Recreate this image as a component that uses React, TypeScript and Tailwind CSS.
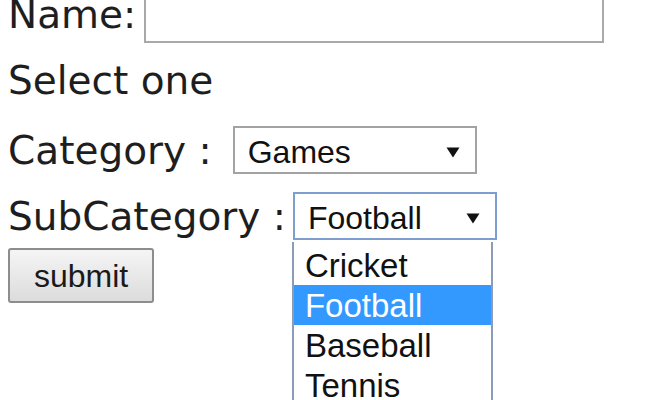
import React from "react";

const labelFont = { fontFamily: '"DejaVu Sans", Verdana, sans-serif' };
const controlFont = { fontFamily: '"Liberation Sans", Arial, sans-serif' };

function Arrow() {
  return (
    <svg width="14" height="11" viewBox="0 0 14 11" className="shrink-0">
      <path d="M0.5 0.5 H13.5 L7 10.5 Z" fill="#111" />
    </svg>
  );
}

function FakeSelect({
  value,
  width,
  borderClass,
  children,
}: {
  value: string;
  width: string;
  borderClass: string;
  children?: React.ReactNode;
}) {
  return (
    <div className={`relative ${width}`}>
      <div
        className={`h-[48px] w-full bg-white border-2 ${borderClass} flex items-center justify-between pl-[13px] pr-[15px] pt-[4px]`}
      >
        <span className="text-[32px] leading-none text-[#111]" style={controlFont}>
          {value}
        </span>
        <Arrow />
      </div>
      {children}
    </div>
  );
}

const subOptions = ["Cricket", "Football", "Baseball", "Tennis", "Hockey"];

export default function App() {
  return (
    <div className="h-[400px] w-[650px] overflow-hidden bg-white">
      <form className="flex flex-col pl-[8px] -mt-[5px] text-[#1e1e1e]">
        {/* Name */}
        <div className="flex items-start h-[48px]">
          <span className="text-[39px] leading-[39px]" style={labelFont}>
            Name:
          </span>
          <div className="ml-[8px] h-[48px] w-[460px] border-2 border-[#a9a9a9] bg-white" />
        </div>

        <div className="mt-[18px] text-[39px] leading-[39px]" style={labelFont}>
          Select one
        </div>

        {/* Category */}
        <div className="mt-[26px] flex items-center h-[48px]">
          <span className="text-[39px] leading-[39px] whitespace-pre" style={labelFont}>
            Category :
          </span>
          <div className="ml-[21px]">
            <FakeSelect value="Games" width="w-[244px]" borderClass="border-[#a3a3a3]" />
          </div>
        </div>

        {/* SubCategory with its open option list */}
        <div className="mt-[18px] flex items-center h-[48px]">
          <span className="text-[39px] leading-[39px] whitespace-pre" style={labelFont}>
            SubCategory :
          </span>
          <div className="ml-[7px]">
            <FakeSelect value="Football" width="w-[204px]" borderClass="border-[#7f9dcf]">
              <ul
                className="absolute left-[-1px] top-[50px] w-[201px] bg-white border-x-2 border-[#8b9cb6] pt-[3px]"
                style={controlFont}
              >
                {subOptions.map((o) => (
                  <li
                    key={o}
                    className={`h-[40px] flex items-center pl-[11px] text-[33px] leading-none ${
                      o === "Football" ? "bg-[#3399ff] text-white" : "text-[#111]"
                    }`}
                  >
                    {o}
                  </li>
                ))}
              </ul>
            </FakeSelect>
          </div>
        </div>

        <div className="mt-[8px]">
          <button
            type="button"
            className="h-[55px] w-[146px] rounded-[3px] border-2 border-[#8d8d8d] bg-linear-to-b from-[#f5f5f5] to-[#dcdcdc] text-[32px] leading-none text-[#1a1a1a]"
            style={controlFont}
          >
            submit
          </button>
        </div>
      </form>
    </div>
  );
}
